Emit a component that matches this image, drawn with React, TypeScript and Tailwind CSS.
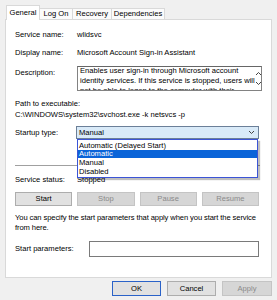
import React from "react";

const font = { fontFamily: '"Liberation Sans", Arial, sans-serif' };

function Chevron({ up = false }: { up?: boolean }) {
    return (
        <svg width="7" height="5" viewBox="0 0 7 5" className="block">
            <path
                d={up ? "M1 4 L3.5 1.5 L6 4" : "M1 1 L3.5 3.5 L6 1"}
                fill="none"
                stroke="#444"
                strokeWidth="1"
            />
        </svg>
    );
}

function Btn({ label, disabled = false, primary = false, className = "" }: { label: string; disabled?: boolean; primary?: boolean; className?: string }) {
    return (
        <div
            className={
                "flex items-center justify-center border " +
                (disabled
                    ? "bg-[#d6d6d6] border-[#c4c4c4] text-[#8a8a8a] "
                    : primary
                    ? "bg-[#e1e1e1] border-[#2a62c8] text-black "
                    : "bg-[#e1e1e1] border-[#adadad] text-black ") +
                className
            }
        >
            {label}
        </div>
    );
}

const tabs = [
    { name: "General", w: "w-[34px]", active: true },
    { name: "Log On", w: "w-[33px]", active: false },
    { name: "Recovery", w: "w-[39px]", active: false },
    { name: "Dependencies", w: "w-[53px]", active: false },
];

export default function App() {
    return (
        <div style={font} className="w-[277px] h-[300px] bg-[#f0f0f0] pl-[5px] pr-[5px] pt-[5px] text-[7.6px] text-black overflow-hidden leading-none">
            {/* tab strip */}
            <div className="flex items-end h-[14px] pl-[1px]">
                {tabs.map((t) =>
                    t.active ? (
                        <div
                            key={t.name}
                            className={"relative z-10 h-[15px] -mb-px bg-white border border-b-0 border-[#d9d9d9] flex items-center justify-center pb-[1px] " + t.w}
                        >
                            {t.name}
                        </div>
                    ) : (
                        <div
                            key={t.name}
                            className={"h-[11px] bg-[#fbfbfb] border border-b-0 border-l-0 border-[#d9d9d9] flex items-center justify-center " + t.w}
                        >
                            {t.name}
                        </div>
                    )
                )}
            </div>

            {/* tab panel */}
            <div className="h-[259px] bg-white border border-[#d9d9d9] pl-[9px] pr-[11px] flex flex-col">
                <div className="mt-[9px] h-[12px] flex items-center">
                    <span className="w-[62px]">Service name:</span>
                    <span>wlidsvc</span>
                </div>
                <div className="mt-[6px] h-[12px] flex items-center">
                    <span className="w-[62px]">Display name:</span>
                    <span>Microsoft Account Sign-in Assistant</span>
                </div>
                <div className="mt-[7px] h-[25px] flex">
                    <span className="w-[62px] h-[12px] mt-[1px] flex items-center">Description:</span>
                    <div className="flex-1 mr-[-2px] border border-[#828282] border-t-[#666] overflow-hidden flex">
                        <div className="flex-1 pl-[2px] leading-[10px] -mt-[1px] whitespace-nowrap">
                            <div>Enables user sign-in through Microsoft account</div>
                            <div>identity services. If this service is stopped, users will</div>
                            <div>not be able to logon to the computer with their</div>
                        </div>
                        <div className="w-[12px] flex flex-col items-center pt-[4px] gap-[5px]">
                            <Chevron up />
                            <Chevron />
                        </div>
                    </div>
                </div>
                <div className="mt-[7px] h-[11px] flex items-center">Path to executable:</div>
                <div className="h-[11px] flex items-center">C:\WINDOWS\system32\svchost.exe -k netsvcs -p</div>

                <div className="mt-[6px] h-[13px] flex items-center">
                    <span className="w-[61px]">Startup type:</span>
                    <div className="relative flex-1 h-full mr-[1px]">
                        <div className="h-full bg-[#d9eaf8] border border-[#6b7f98] flex items-center pl-[2px] pr-[3px]">
                            <span className="flex-1">Manual</span>
                            <Chevron />
                        </div>
                        {/* open dropdown list */}
                        <div className="absolute left-[1px] right-[1px] top-[13px] z-20 bg-white border border-[#3b54d6] shadow-[2px_2px_1px_rgba(0,0,0,0.25)] py-[1px]">
                            <div className="pl-[1px] h-[9px] flex items-center">Automatic (Delayed Start)</div>
                            <div className="pl-[1px] h-[8px] flex items-center bg-[#0a64d8] text-white">Automatic</div>
                            <div className="pl-[1px] h-[9px] flex items-center">Manual</div>
                            <div className="pl-[1px] h-[9px] flex items-center">Disabled</div>
                        </div>
                    </div>
                </div>

                <div className="mt-[26px] h-px bg-[#a0a0a0]" />

                <div className="mt-[8px] h-[12px] flex items-center">
                    <span className="w-[62px]">Service status:</span>
                    <span>Stopped</span>
                </div>

                <div className="mt-[6px] h-[14px] grid grid-cols-4 gap-[5px] pr-[1px]">
                    <Btn label="Start" />
                    <Btn label="Stop" disabled />
                    <Btn label="Pause" disabled />
                    <Btn label="Resume" disabled />
                </div>

                <div className="mt-[7px] leading-[10px] whitespace-nowrap tracking-[-0.1px]">
                    <div>You can specify the start parameters that apply when you start the service</div>
                    <div>from here.</div>
                </div>

                <div className="mt-[8px] h-[16px] flex items-center">
                    <span className="w-[74px]">Start parameters:</span>
                    <div className="flex-1 h-full border border-[#7a7a7a] bg-white mr-[1px]" />
                </div>
            </div>

            {/* dialog buttons */}
            <div className="mt-[3px] h-[15px] flex justify-end gap-[6px]">
                <Btn label="OK" primary className="w-[49px]" />
                <Btn label="Cancel" className="w-[49px]" />
                <Btn label="Apply" disabled className="w-[50px]" />
            </div>
        </div>
    );
}
